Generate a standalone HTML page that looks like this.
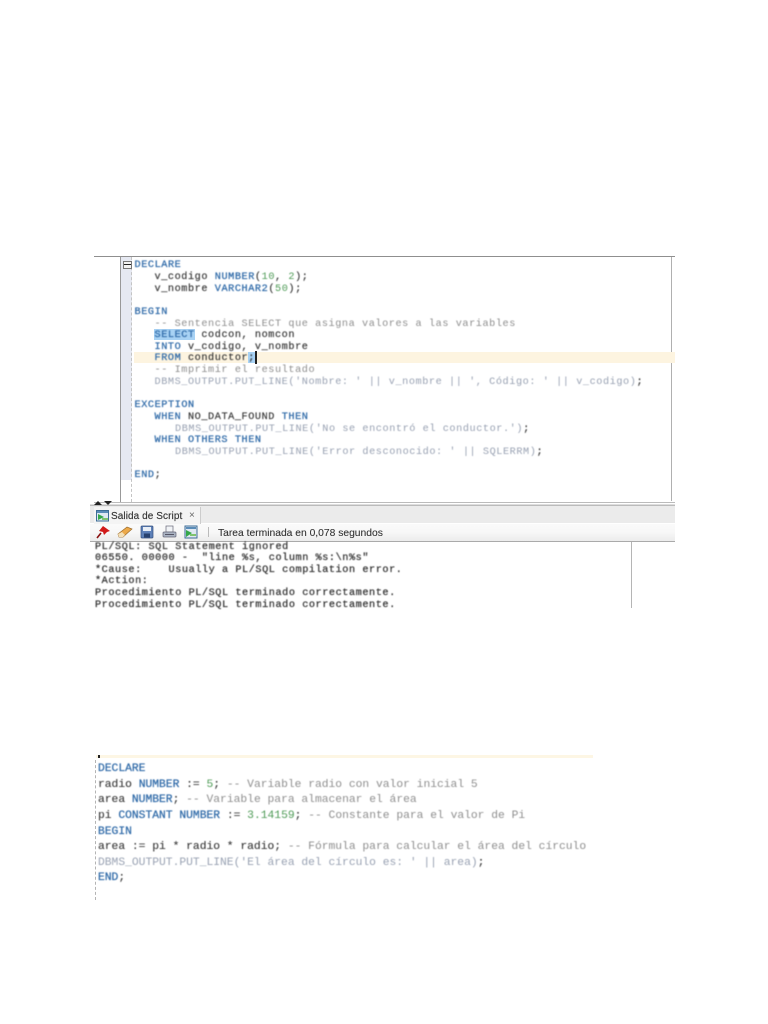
<!DOCTYPE html>
<html lang="es">
<head>
<meta charset="utf-8">
<title>PL/SQL</title>
<style>
html,body{margin:0;padding:0;background:#fff;}
#p{position:relative;width:768px;height:1024px;overflow:hidden;background:#fff;}
.b{position:absolute;}
pre{position:absolute;margin:0;white-space:pre;font-family:"Liberation Mono",monospace;filter:blur(.4px);}
.a{font-size:10.2px;letter-spacing:.58px;line-height:12px;color:#333;-webkit-text-stroke:.15px #333;margin-top:1px;}
.c{font-size:10.2px;letter-spacing:.57px;line-height:12px;color:#333;-webkit-text-stroke:.25px #333;left:95px;margin-top:1.5px;}
.d{font-size:11.3px;letter-spacing:0;line-height:14px;color:#333;left:98px;-webkit-text-stroke:.1px #333;margin-top:1.5px;}
.k{color:#2f6aa8;-webkit-text-stroke:.25px #2f6aa8;}
.n{color:#4d9a55;-webkit-text-stroke:0;}
.g{color:#8e8e8e;-webkit-text-stroke:0;}
.o{color:#98a1b2;-webkit-text-stroke:0;}
.t{position:absolute;font-family:"Liberation Sans",sans-serif;white-space:pre;filter:blur(.3px);color:#333;}
svg{position:absolute;}
</style>
</head>
<body>
<div id="p">
<!-- Editor frame -->
<div class="b" style="left:94px;top:256px;width:581px;height:1px;background:#8f8f8f;"></div>
<div class="b" style="left:120px;top:257px;width:1px;height:246px;background:#999;"></div>
<div class="b" style="left:121px;top:257px;width:11px;height:223px;background:#e6e9f2;"></div>
<div class="b" style="left:131px;top:257px;width:0;height:245px;border-left:1px dashed #c4c4c4;"></div>
<div class="b" style="left:671px;top:257px;width:1px;height:244px;background:#b0b0b0;"></div>
<div class="b" style="left:123px;top:261px;width:7px;height:6px;border:1px solid #777;background:#f2f2f2;"></div>
<div class="b" style="left:124px;top:264px;width:7px;height:1px;background:#222;"></div>
<div class="b" style="left:134px;top:352px;width:541px;height:11px;background:#fdf4e0;"></div>
<div class="b" style="left:154px;top:329px;width:41px;height:11px;background:#a8d2f4;"></div>
<div class="b" style="left:248px;top:352px;width:7px;height:11px;background:#a8d2f4;"></div>
<div class="b" style="left:255px;top:351px;width:2px;height:13px;background:#222;"></div>

<!-- Editor code -->
<pre class="a" style="left:134.5px;top:259px;"><span class="k">DECLARE</span></pre>
<pre class="a" style="left:154.5px;top:270.5px;">v_codigo <span class="k">NUMBER</span>(<span class="n">10</span>, <span class="n">2</span>);</pre>
<pre class="a" style="left:154.5px;top:282.5px;">v_nombre <span class="k">VARCHAR2</span>(<span class="n">50</span>);</pre>
<pre class="a" style="left:134.5px;top:305.5px;"><span class="k">BEGIN</span></pre>
<pre class="a" style="left:154.5px;top:317.5px;"><span class="g">-- Sentencia SELECT que asigna valores a las variables</span></pre>
<pre class="a" style="left:154.5px;top:329px;"><span class="k">SELECT</span> codcon, nomcon</pre>
<pre class="a" style="left:154.5px;top:340.5px;"><span class="k">INTO</span> v_codigo, v_nombre</pre>
<pre class="a" style="left:154.5px;top:352px;"><span class="k">FROM</span> conductor;</pre>
<pre class="a" style="left:154.5px;top:364px;"><span class="g">-- Imprimir el resultado</span></pre>
<pre class="a" style="left:154.5px;top:375.5px;"><span class="o">DBMS_OUTPUT.PUT_LINE('Nombre: ' || v_nombre || ', Código: ' || v_codigo)</span>;</pre>
<pre class="a" style="left:134.5px;top:399px;"><span class="k">EXCEPTION</span></pre>
<pre class="a" style="left:154.5px;top:410.5px;"><span class="k">WHEN</span> NO_DATA_FOUND <span class="k">THEN</span></pre>
<pre class="a" style="left:175px;top:422.5px;"><span class="o">DBMS_OUTPUT.PUT_LINE('No se encontró el conductor.')</span>;</pre>
<pre class="a" style="left:154.5px;top:434px;"><span class="k">WHEN OTHERS THEN</span></pre>
<pre class="a" style="left:175px;top:445.5px;"><span class="o">DBMS_OUTPUT.PUT_LINE('Error desconocido: ' || SQLERRM)</span>;</pre>
<pre class="a" style="left:134.5px;top:469px;"><span class="k">END</span>;</pre>

<!-- Output panel -->
<div class="b" style="left:94px;top:502px;width:581px;height:1px;background:#bbb;"></div>
<div class="b" style="left:90px;top:504px;width:585px;height:1px;background:#ddd;"></div>
<div class="b" style="left:90px;top:505px;width:585px;height:1px;background:#bbb;"></div>
<div class="b" style="left:90px;top:506px;width:585px;height:17px;background:#ebebeb;"></div>
<div class="b" style="left:90px;top:523px;width:585px;height:1px;background:#fff;"></div>
<div class="b" style="left:90px;top:524px;width:585px;height:17px;background:linear-gradient(#fafafa,#f8f8f8 45%,#ececec);"></div>
<div class="b" style="left:90px;top:541px;width:585px;height:1px;background:#aaa;"></div>
<div class="b" style="left:631px;top:542px;width:1px;height:66px;background:#b5b5b5;"></div>
<div class="b" style="left:94px;top:507px;width:107px;height:17px;background:#f4f4f4;border-right:1px solid #ccc;box-sizing:border-box;"></div>

<svg style="left:94px;top:500px;" width="22" height="6" viewBox="0 0 22 6"><path d="M0 5L4 1L8 5Z" fill="#222"/><path d="M10 1L18 1L14 5Z" fill="#222"/></svg>

<svg style="left:96px;top:509px;" width="13" height="13" viewBox="0 0 13 13"><rect x=".5" y="1.5" width="12" height="10.5" fill="#dfe8f2" stroke="#3d6d96"/><rect x="1" y="2" width="11" height="2" fill="#5a8cb8"/><path d="M2 5L8 8L2 11Z" fill="#35a84a"/><path d="M6 9h6v2H6z" fill="#7fc46f"/></svg>
<div class="t" style="left:111px;top:510px;font-size:10px;line-height:13px;letter-spacing:.08px;-webkit-text-stroke:.15px #333;">Salida de Script</div>
<div class="t" style="left:189px;top:509px;font-size:10px;line-height:13px;color:#666;">×</div>

<!-- Toolbar icons -->
<svg style="left:96px;top:525px;" width="15" height="14" viewBox="0 0 15 14"><path d="M7 1L14 6L11 7L8 10L7 7L3 6Z" fill="#d11a1a"/><path d="M5 8L1 13" stroke="#8a1010" stroke-width="1.6"/></svg>
<svg style="left:117px;top:525px;" width="16" height="14" viewBox="0 0 16 14"><path d="M1 9L10 2L15 4L6 12L2 12Z" fill="#eca94a" stroke="#9a6a2a" stroke-width=".7"/><path d="M1 9L5 7L8 10L6 12L2 12Z" fill="#f4e0b8"/></svg>
<svg style="left:140px;top:525px;" width="14" height="14" viewBox="0 0 14 14"><rect x="1" y="1" width="12" height="12" rx="1" fill="#5d80b8" stroke="#37507f" stroke-width=".7"/><rect x="3" y="2" width="8" height="4" fill="#e8eef6"/><rect x="4" y="8.5" width="6" height="4" fill="#27416e"/></svg>
<svg style="left:162px;top:525px;" width="15" height="14" viewBox="0 0 15 14"><rect x="4" y="1" width="7" height="6" fill="#f1f3f6" stroke="#667" stroke-width=".7"/><rect x="1" y="7" width="13" height="5" rx="1" fill="#aab3c2" stroke="#667" stroke-width=".7"/><rect x="3" y="9" width="9" height="1" fill="#556"/></svg>
<svg style="left:184px;top:525px;" width="14" height="14" viewBox="0 0 14 14"><rect x="1" y="1" width="12" height="12" fill="#dfe8f2" stroke="#3d6d96"/><rect x="2" y="2" width="10" height="2" fill="#5a8cb8"/><path d="M2 5L8 8L2 12Z" fill="#35a84a"/><path d="M6 9h6v2H6z" fill="#7fc46f"/></svg>
<div class="b" style="left:208px;top:527px;width:1px;height:10px;background:#bbb;"></div>
<div class="t" style="left:218px;top:527px;font-size:10.3px;line-height:13px;letter-spacing:0;-webkit-text-stroke:.1px #333;">Tarea terminada en 0,078 segundos</div>

<!-- Output text -->
<pre class="c" style="top:540px;">PL/SQL: SQL Statement ignored</pre>
<pre class="c" style="top:551.5px;">06550. 00000 -  "line %s, column %s:\n%s"</pre>
<pre class="c" style="top:563px;">*Cause:    Usually a PL/SQL compilation error.</pre>
<pre class="c" style="top:574.5px;">*Action:</pre>
<pre class="c" style="top:586.5px;">Procedimiento PL/SQL terminado correctamente.</pre>
<pre class="c" style="top:598px;">Procedimiento PL/SQL terminado correctamente.</pre>

<!-- Second snippet -->
<div class="b" style="left:96px;top:755px;width:497px;height:3px;background:#fdf6e4;"></div>
<div class="b" style="left:98px;top:755px;width:2px;height:3px;background:#222;"></div>
<div class="b" style="left:95px;top:760px;width:0;height:140px;border-left:1px dashed #b4b4b4;"></div>
<pre class="d" style="top:760px;"><span class="k">DECLARE</span></pre>
<pre class="d" style="top:776px;">radio <span class="k">NUMBER</span> := <span class="n">5</span>; <span class="g">-- Variable radio con valor inicial 5</span></pre>
<pre class="d" style="top:791.5px;">area <span class="k">NUMBER</span>; <span class="g">-- Variable para almacenar el área</span></pre>
<pre class="d" style="top:807px;">pi <span class="k">CONSTANT NUMBER</span> := <span class="n">3.14159</span>; <span class="g">-- Constante para el valor de Pi</span></pre>
<pre class="d" style="top:823px;"><span class="k">BEGIN</span></pre>
<pre class="d" style="top:838.5px;">area := pi * radio * radio; <span class="g">-- Fórmula para calcular el área del círculo</span></pre>
<pre class="d" style="top:854px;"><span class="o">DBMS_OUTPUT.PUT_LINE('El área del círculo es: ' || area)</span>;</pre>
<pre class="d" style="top:869.5px;"><span class="k">END</span>;</pre>
</div>
</body>
</html>
